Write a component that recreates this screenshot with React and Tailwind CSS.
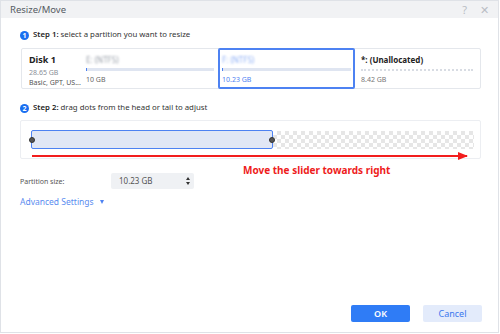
import React from 'react';

const font = { fontFamily: '"Noto Sans", "Open Sans", sans-serif' };

function StepBadge({ n }) {
  return (
    <span className="w-[9px] h-[9px] rounded-full bg-[#1a6ff0] text-white text-[7px] font-bold flex items-center justify-center leading-none">
      {n}
    </span>
  );
}

export default function App() {
  return (
    <div className="w-[500px] h-[334px] bg-white" style={font}>
      <div className="w-[499px] h-[333px] border border-[#dfe2e7] flex flex-col">
        {/* Title bar */}
        <div className="h-[17px] bg-[#f1f2f4] flex items-center justify-between pl-[9px] pr-[9px]">
          <span className="text-[9.5px] text-[#555a62] leading-none">Resize/Move</span>
          <div className="flex items-center gap-[13px] text-[#b9bdc4] text-[11px] leading-none">
            <span>?</span>
            <span>✕</span>
          </div>
        </div>

        <div className="flex-1 flex flex-col px-[19px]">
          {/* Step 1 */}
          <div className="flex items-center gap-[4px] mt-[12px] h-[10px]">
            <StepBadge n="1" />
            <span className="text-[7.8px] text-[#333] leading-none">
              <b className="font-semibold text-[#222]">Step 1:</b> select a partition you want to resize
            </span>
          </div>

          <div className="mt-[8px] h-[41px] w-[460px] flex border border-[#e4e7ec] rounded-[2px] ml-[1px]">
            <div className="w-[62px] pl-[7px] pt-[6px] flex flex-col">
              <span className="text-[9px] font-bold text-[#222] leading-none">Disk 1</span>
              <span className="text-[7px] text-[#8a8f98] leading-none mt-[5px]">28.65 GB</span>
              <span className="text-[7px] text-[#555] leading-none mt-[3px] whitespace-nowrap">Basic, GPT, US...</span>
            </div>
            <div className="w-[134px] pl-[2px] pr-[4px] pt-[7px] flex flex-col">
              <span className="text-[8px] text-[#9aa0aa] leading-none blur-[1.2px]">E: (NTFS)</span>
              <div className="mt-[4px] h-[3px] bg-[#dfe5f1] flex">
                <div className="w-[1px] h-full bg-[#4a7ff0]" />
              </div>
              <span className="text-[7px] text-[#666] leading-none mt-[5px]">10 GB</span>
            </div>
            <div className="w-[137px] -my-[1px] border-2 border-[#4d82f2] rounded-[2px] pl-[2px] pr-[2px] pt-[6px] flex flex-col">
              <span className="text-[8px] text-[#8fb0f5] leading-none blur-[1.2px]">F: (NTFS)</span>
              <div className="mt-[4px] h-[3px] bg-[#dfe5f1] flex">
                <div className="w-[1px] h-full bg-[#4a7ff0]" />
              </div>
              <span className="text-[7px] text-[#4d82f2] leading-none mt-[5px]">10.23 GB</span>
            </div>
            <div className="flex-1 pl-[6px] pr-[7px] pt-[7px] flex flex-col">
              <span className="text-[8px] font-bold text-[#222] leading-none">*: (Unallocated)</span>
              <div className="mt-[5px] h-[2px] border-t-2 border-dotted border-[#d8dce3]" />
              <span className="text-[7px] text-[#777] leading-none mt-[5px]">8.42 GB</span>
            </div>
          </div>

          {/* Step 2 */}
          <div className="flex items-center gap-[4px] mt-[14px] h-[10px]">
            <StepBadge n="2" />
            <span className="text-[7.8px] text-[#333] leading-none">
              <b className="font-semibold text-[#222]">Step 2:</b> drag dots from the head or tail to adjust
            </span>
          </div>

          <div className="relative mt-[7px] h-[39px] w-[461px] border border-[#eceef2] rounded-[2px] flex items-center pl-[10px] pr-[6px]">
            <div className="relative w-[242px] h-[19px] bg-[#e1e7f5] border border-[#4d82f2] rounded-[2px]">
              <span className="absolute -left-[3px] top-[6px] w-[6px] h-[6px] rounded-full bg-[#555] border border-[#333]" />
              <span className="absolute -right-[3px] top-[6px] w-[6px] h-[6px] rounded-full bg-[#555] border border-[#333]" />
            </div>
            <div className="flex-1 h-[18px] bg-[repeating-conic-gradient(#e6e6e6_0_25%,#ffffff_0_50%)] bg-[length:8px_8px]" />
            {/* red arrow */}
            <div className="absolute left-[11px] top-[34px] w-[435px] h-[2px] bg-[#f21d1d]" />
            <svg className="absolute left-[437px] top-[31px]" width="10" height="8" viewBox="0 0 10 8">
              <path d="M0 0 L10 4 L0 8 Z" fill="#f21d1d" />
            </svg>
          </div>

          <div className="flex mt-[4px] pl-[223px] h-[13px] items-center">
            <span className="text-[10px] font-bold text-[#ee1c1c] leading-none whitespace-nowrap">Move the slider towards right</span>
          </div>

          <div className="flex items-center -mt-[3px]">
            <span className="w-[91px] text-[7px] text-[#555] leading-none">Partition size:</span>
            <div className="w-[83px] h-[16px] bg-[#eff1f4] rounded-[2px] flex items-center justify-between pl-[8px] pr-[4px]">
              <span className="text-[8px] text-[#555] leading-none">10.23 GB</span>
              <div className="flex flex-col items-center gap-[2px]">
                <span className="w-0 h-0 border-l-[2px] border-r-[2px] border-b-[3px] border-l-transparent border-r-transparent border-b-[#333]" />
                <span className="w-0 h-0 border-l-[2px] border-r-[2px] border-t-[3px] border-l-transparent border-r-transparent border-t-[#333]" />
              </div>
            </div>
          </div>

          <div className="flex items-center mt-[9px] gap-[6px]">
            <span className="text-[8.5px] text-[#5a8cf0] leading-none">Advanced Settings</span>
            <span className="w-0 h-0 border-l-[2.5px] border-r-[2.5px] border-t-[4px] border-l-transparent border-r-transparent border-t-[#4d82f2]" />
          </div>

          <div className="flex-1" />

          <div className="flex justify-end gap-[13px] mb-[10px] mr-[-3px]">
            <button className="w-[59px] h-[17px] bg-[#2f7cf6] rounded-[2px] text-white text-[9px] font-semibold leading-none">OK</button>
            <button className="w-[59px] h-[17px] bg-[#e3ebfb] rounded-[2px] text-[#3a78ee] text-[9px] leading-none">Cancel</button>
          </div>
        </div>
      </div>
    </div>
  );
}
